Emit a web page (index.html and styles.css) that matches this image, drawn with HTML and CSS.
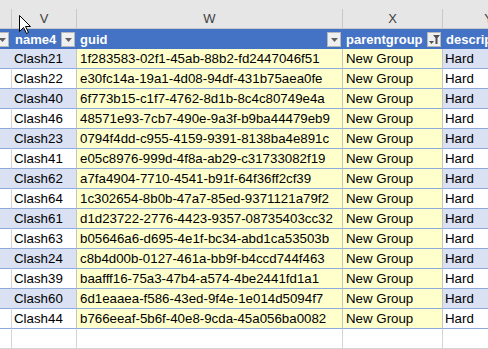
FILE: index.html
```html
<!DOCTYPE html>
<html>
<head>
<meta charset="utf-8">
<link rel="stylesheet" href="styles.css">
</head>
<body>
<div class="sheet">
  <div class="row colheads">
    <div class="ch"></div>
    <div class="ch">V</div>
    <div class="ch">W</div>
    <div class="ch">X</div>
    <div class="ch last">Y</div>
  </div>
  <div class="row thead">
    <div class="th"><span class="btn"><svg width="7" height="4" viewBox="0 0 7 4"><path d="M0 0H7L3.5 4Z" fill="#606060"/></svg></span></div>
    <div class="th"><span class="lbl">name4</span><span class="btn"><svg width="7" height="4" viewBox="0 0 7 4"><path d="M0 0H7L3.5 4Z" fill="#606060"/></svg></span></div>
    <div class="th"><span class="lbl">guid</span><span class="btn"><svg width="7" height="4" viewBox="0 0 7 4"><path d="M0 0H7L3.5 4Z" fill="#606060"/></svg></span></div>
    <div class="th"><span class="lbl">parentgroup</span><span class="btn"><svg width="11" height="10" viewBox="0 0 11 10"><path d="M4 0H11L8.5 3V9H6.5V3Z" fill="#505050"/><path d="M0 6H5L2.5 9Z" fill="#505050"/></svg></span></div>
    <div class="th last"><span class="lbl">descrip</span></div>
  </div>
  <div class="row band"><div class="c"></div><div class="c">Clash21</div><div class="c y">1f283583-02f1-45ab-88b2-fd2447046f51</div><div class="c y">New Group</div><div class="c">Hard</div></div>
  <div class="row"><div class="c"></div><div class="c">Clash22</div><div class="c y">e30fc14a-19a1-4d08-94df-431b75aea0fe</div><div class="c y">New Group</div><div class="c">Hard</div></div>
  <div class="row band"><div class="c"></div><div class="c">Clash40</div><div class="c y">6f773b15-c1f7-4762-8d1b-8c4c80749e4a</div><div class="c y">New Group</div><div class="c">Hard</div></div>
  <div class="row"><div class="c"></div><div class="c">Clash46</div><div class="c y">48571e93-7cb7-490e-9a3f-b9ba44479eb9</div><div class="c y">New Group</div><div class="c">Hard</div></div>
  <div class="row band"><div class="c"></div><div class="c">Clash23</div><div class="c y">0794f4dd-c955-4159-9391-8138ba4e891c</div><div class="c y">New Group</div><div class="c">Hard</div></div>
  <div class="row"><div class="c"></div><div class="c">Clash41</div><div class="c y">e05c8976-999d-4f8a-ab29-c31733082f19</div><div class="c y">New Group</div><div class="c">Hard</div></div>
  <div class="row band"><div class="c"></div><div class="c">Clash62</div><div class="c y">a7fa4904-7710-4541-b91f-64f36ff2cf39</div><div class="c y">New Group</div><div class="c">Hard</div></div>
  <div class="row"><div class="c"></div><div class="c">Clash64</div><div class="c y">1c302654-8b0b-47a7-85ed-9371121a79f2</div><div class="c y">New Group</div><div class="c">Hard</div></div>
  <div class="row band"><div class="c"></div><div class="c">Clash61</div><div class="c y">d1d23722-2776-4423-9357-08735403cc32</div><div class="c y">New Group</div><div class="c">Hard</div></div>
  <div class="row"><div class="c"></div><div class="c">Clash63</div><div class="c y">b05646a6-d695-4e1f-bc34-abd1ca53503b</div><div class="c y">New Group</div><div class="c">Hard</div></div>
  <div class="row band"><div class="c"></div><div class="c">Clash24</div><div class="c y">c8b4d00b-0127-461a-bb9f-b4ccd744f463</div><div class="c y">New Group</div><div class="c">Hard</div></div>
  <div class="row"><div class="c"></div><div class="c">Clash39</div><div class="c y">baafff16-75a3-47b4-a574-4be2441fd1a1</div><div class="c y">New Group</div><div class="c">Hard</div></div>
  <div class="row band"><div class="c"></div><div class="c">Clash60</div><div class="c y">6d1eaaea-f586-43ed-9f4e-1e014d5094f7</div><div class="c y">New Group</div><div class="c">Hard</div></div>
  <div class="row"><div class="c"></div><div class="c">Clash44</div><div class="c y">b766eeaf-5b6f-40e8-9cda-45a056ba0082</div><div class="c y">New Group</div><div class="c">Hard</div></div>
  <div class="row empty"><div class="c"></div><div class="c"></div><div class="c"></div><div class="c"></div><div class="c"></div></div>
  <svg class="cursor" width="13" height="20" viewBox="0 0 13 20"><path d="M0.5 0.5V16.5L4.5 12.5L7.5 18.5L9.5 17.5L6.5 11.5H11.5Z" fill="#fff" stroke="#000" stroke-width="1" stroke-linejoin="miter"/></svg>
</div>
</body>
</html>
```
FILE: styles.css
```css
html, body {
  margin: 0;
  padding: 0;
  background: #ffffff;
}
.sheet {
  position: relative;
  width: 488px;
  height: 349px;
  overflow: hidden;
  font-family: "Liberation Sans", Arial, sans-serif;
}
.row {
  display: grid;
  grid-template-columns: 12px 65px 266px 100px 92px;
  width: 535px;
}
.colheads {
  height: 29px;
  background: #e6e6e6;
  border-bottom: 1px solid #c8c8c8;
  box-sizing: border-box;
}
.ch {
  margin-top: 9px;
  height: 19px;
  line-height: 19px;
  border-right: 1px solid #c8c8c8;
  text-align: center;
  font-size: 13px;
  color: #404040;
}
.thead {
  height: 20px;
  background: #4472c4;
}
.th {
  display: flex;
  align-items: center;
  justify-content: space-between;
  padding-left: 3px;
  padding-right: 2px;
  min-width: 0;
  overflow: hidden;
  white-space: nowrap;
  color: #ffffff;
  font-weight: bold;
  font-size: 13px;
}
.th:first-child {
  justify-content: flex-end;
  padding: 0 3px 0 0;
}
.th.last {
  padding-left: 3px;
}
.btn {
  flex: none;
  width: 14px;
  height: 15px;
  background: #f0f0f0;
  border: 1px solid #b8b8b8;
  box-sizing: border-box;
  display: flex;
  align-items: center;
  justify-content: center;
  padding-top: 2px;
}
.row:not(.colheads):not(.thead) {
  height: 20px;
}
.c {
  height: 20px;
  box-sizing: border-box;
  border-bottom: 1px solid #8ea9db;
  border-right: 1px solid #d4d4d4;
  padding-left: 2px;
  font-size: 13.3px;
  line-height: 19px;
  color: #000000;
  white-space: nowrap;
  overflow: hidden;
}
.band .c {
  background: #d9e1f2;
  border-right-color: #d9e1f2;
}
.c.y,
.band .c.y {
  background: #ffffcc;
  border-right-color: #c4c4c4;
  border-left: 1px solid #c4c4c4;
  margin-left: -1px;
  padding-left: 3px;
}
.empty .c {
  border-bottom-color: #d4d4d4;
  border-right-color: #d4d4d4;
}
.cursor {
  position: absolute;
  left: 19px;
  top: 15px;
}
```
